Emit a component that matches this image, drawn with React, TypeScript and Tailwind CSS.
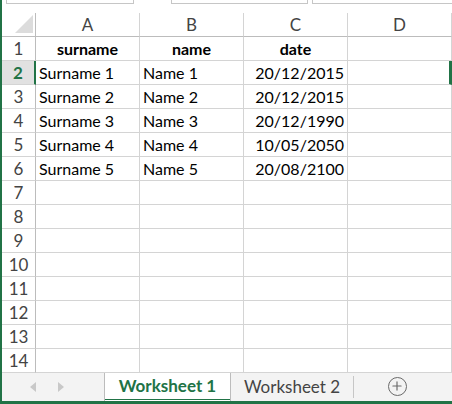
import { Plus } from "lucide-react"

const rows = [
  ["surname", "name", "date"],
  ["Surname 1", "Name 1", "20/12/2015"],
  ["Surname 2", "Name 2", "20/12/2015"],
  ["Surname 3", "Name 3", "20/12/1990"],
  ["Surname 4", "Name 4", "10/05/2050"],
  ["Surname 5", "Name 5", "20/08/2100"],
]

const font = { fontFamily: "Lato, 'Open Sans', sans-serif" }

function RowHeader({ n }: { n: number }) {
  const selected = n === 2
  if (selected) {
    return (
      <div className="h-6 flex items-center justify-center bg-[#e1e1e1] border-b border-[#d4d4d4] border-r-2 border-r-[#217346] text-[17px] font-bold text-[#217346]">
        {n}
      </div>
    )
  }
  return (
    <div className="h-6 flex items-center justify-center border-b border-r border-[#d4d4d4] border-r-[#bcbcbc] text-[17px] text-[#444]">
      {n}
    </div>
  )
}

export default function App() {
  const body = Array.from({ length: 14 }, (_, i) => rows[i] ?? ["", "", ""])

  return (
    <div className="w-[452px] h-[404px] bg-white flex flex-col overflow-hidden border-l-2 border-[#217346]" style={font}>
      {/* formula bar remnants */}
      <div className="h-[13px] relative">
        <div className="absolute left-[4px] top-0 w-[128px] h-[4px] border border-t-0 border-[#c6c6c6]" />
        <div className="absolute left-[169px] top-0 w-[137px] h-[4px] border border-t-0 border-[#c6c6c6]" />
        <div className="absolute left-[310px] top-0 w-[150px] h-[4px] border border-t-0 border-[#c6c6c6]" />
      </div>

      <div className="grid grid-cols-[34px_104px_104px_104px_104px]">
        {/* column header row */}
        <div className="h-6 border-b border-r border-[#bcbcbc] flex items-end justify-end pr-[2px] pb-[3px]">
          <svg width="18" height="18" viewBox="0 0 18 18">
            <polygon points="18,0 18,18 0,18" fill="#dcdcdc" />
          </svg>
        </div>
        {["A", "B", "C", "D"].map((c) => (
          <div key={c} className="h-6 flex items-center justify-center border-b border-[#bcbcbc] border-r border-r-[#d4d4d4] text-[17px] text-[#444]">
            {c}
          </div>
        ))}

        {body.map((r, i) => (
          <div key={i} className="contents">
            <RowHeader n={i + 1} />
            {r.map((v, j) => (
              <div
                key={j}
                className={
                  "h-6 flex items-center border-b border-r border-[#d4d4d4] text-[16px] text-black whitespace-nowrap " +
                  (i === 0
                    ? "justify-center font-bold"
                    : j === 2
                    ? "justify-end pr-[3px]"
                    : "pl-[3px]")
                }
              >
                {v}
              </div>
            ))}
            <div
              className={
                "h-6 border-b border-r border-[#d4d4d4] " +
                (i === 1 ? "border-r-[3px] border-r-[#217346]" : "")
              }
            />
          </div>
        ))}
      </div>

      {/* sheet tabs */}
      <div className="h-[28px] bg-[#f3f3f3] flex items-stretch">
        <div className="w-[102px] flex items-center gap-[22px] pl-[28px]">
          <svg width="6" height="10" viewBox="0 0 6 10">
            <polygon points="6,0 6,10 0,5" fill="#c8c8c8" />
          </svg>
          <svg width="6" height="10" viewBox="0 0 6 10">
            <polygon points="0,0 0,10 6,5" fill="#c8c8c8" />
          </svg>
        </div>
        <div className="w-[127px] bg-white border-x border-[#bcbcbc] flex flex-col">
          <div className="flex-1 flex items-center justify-center text-[17px] font-bold text-[#217346] whitespace-nowrap">
            Worksheet 1
          </div>
          <div className="h-[2px] bg-[#217346] mb-[2px]" />
        </div>
        <div className="w-[122px] flex items-center justify-center text-[17px] text-[#444] whitespace-nowrap">
          Worksheet 2
        </div>
        <div className="w-px my-[3px] bg-[#c6c6c6]" />
        <div className="flex-1 flex items-center justify-center pb-[2px] pr-[12px]">
          <div className="w-[19px] h-[19px] rounded-full border-[1.5px] border-[#6a6a6a] flex items-center justify-center">
            <Plus size={14} strokeWidth={2} color="#6a6a6a" />
          </div>
        </div>
      </div>
      <div className="h-[3px] bg-[#217346]" />
    </div>
  )
}
